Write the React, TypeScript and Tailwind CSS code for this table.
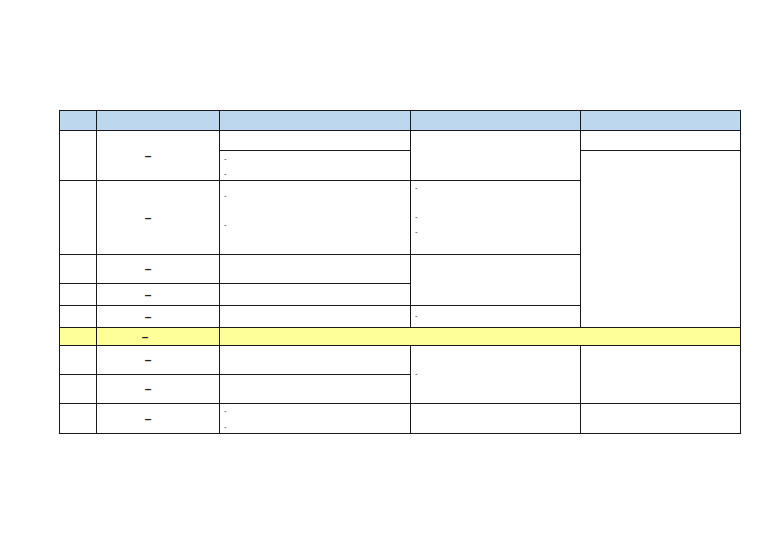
import type { ReactNode } from "react";

const FONT = "font-['Liberation_Sans',Arial,sans-serif]";

// cell borders: thin dark rules like the source sheet
const CELL = "border border-[#1a1a1a] p-0 align-middle text-[8px] leading-[8px]";

function Dash() {
  // long dash, sits a little left of the column centre
  return <div className="text-[12px] font-bold leading-[10px] text-[#222]">–</div>;
}

// stacked lines of tiny text, only the hyphens show at this scale
function Lines({
  items,
  lh = "leading-[14.5px]",
  className = "",
}: {
  items: string[];
  lh?: string;
  className?: string;
}) {
  return (
    <div className={`pl-[4px] text-[8px] text-[#333] ${lh} ${className}`}>
      {items.map((t, i) => (
        <div key={i}>{t || "\u00a0"}</div>
      ))}
    </div>
  );
}

function Td({
  children,
  className = "",
  rowSpan,
  colSpan,
}: {
  children?: ReactNode;
  className?: string;
  rowSpan?: number;
  colSpan?: number;
}) {
  return (
    <td rowSpan={rowSpan} colSpan={colSpan} className={`${CELL} ${className}`}>
      {children}
    </td>
  );
}

function Mid({ rowSpan, wide = false }: { rowSpan?: number; wide?: boolean }) {
  return (
    <Td rowSpan={rowSpan} className={`text-center ${wide ? "pr-[26px]" : "pr-[20px]"}`}>
      <Dash />
    </Td>
  );
}

export default function App() {
  return (
    <div className={`min-h-screen w-[768px] bg-white pl-[59px] pt-[110px] ${FONT}`}>
      <table className="w-[681px] table-fixed border-collapse">
        <colgroup>
          <col className="w-[37px]" />
          <col className="w-[123px]" />
          <col className="w-[191px]" />
          <col className="w-[170px]" />
          <col className="w-[160px]" />
        </colgroup>
        <tbody>
          {/* header ---------------------------------------------------- */}
          <tr className="h-[20px] bg-[#bdd7ee]">
            <Td />
            <Td />
            <Td />
            <Td />
            <Td />
          </tr>

          {/* block 1 --------------------------------------------------- */}
          <tr className="h-[20px]">
            <Td rowSpan={2} />
            <Mid rowSpan={2} />
            <Td />
            <Td rowSpan={2} />
            <Td />
          </tr>
          <tr className="h-[30px]">
            <Td>
              <Lines items={["-", "-"]} lh="leading-[15px]" className="-my-[1px]" />
            </Td>
            <Td rowSpan={5} />
          </tr>

          {/* block 2 --------------------------------------------------- */}
          <tr className="h-[74px]">
            <Td />
            <Mid />
            <Td>
              <Lines items={["-", "", "-", ""]} />
            </Td>
            <Td>
              <Lines items={["-", "", "-", "-", ""]} />
            </Td>
          </tr>

          <tr className="h-[29px]">
            <Td />
            <Mid />
            <Td />
            <Td rowSpan={2} />
          </tr>
          <tr className="h-[22px]">
            <Td />
            <Mid />
            <Td />
          </tr>
          <tr className="h-[22px]">
            <Td />
            <Mid />
            <Td />
            <Td>
              <Lines items={["-"]} className="-my-[3px]" />
            </Td>
          </tr>

          {/* highlighted row ------------------------------------------- */}
          <tr className="h-[18px] bg-[#ffff99]">
            <Td />
            <Mid wide />
            <Td colSpan={3} />
          </tr>

          <tr className="h-[29px]">
            <Td />
            <Mid />
            <Td />
            <Td rowSpan={2}>
              <Lines items={["-"]} />
            </Td>
            <Td rowSpan={2} />
          </tr>
          <tr className="h-[29px]">
            <Td />
            <Mid />
            <Td />
          </tr>

          <tr className="h-[30px]">
            <Td />
            <Mid />
            <Td>
              <Lines items={["-", "-"]} lh="leading-[16px]" className="-my-[2px]" />
            </Td>
            <Td />
            <Td />
          </tr>
        </tbody>
      </table>
    </div>
  );
}
